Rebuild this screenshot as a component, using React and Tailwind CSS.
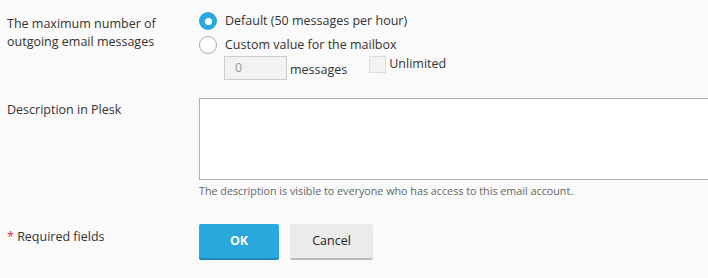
export default function App() {
  return (
    <div className="w-[708px] h-[278px] overflow-hidden bg-[#fafafa] text-[12.5px] leading-[18px] text-[#333] font-['Open_Sans',sans-serif]">
      <div className="flex pt-[10px]">
        <div className="w-[199px] shrink-0 pl-[7px] pt-[5px]">
          The maximum number of outgoing email messages
        </div>
        <div className="flex flex-col">
          <label className="flex items-center h-[22px]">
            <span className="w-[18px] h-[18px] rounded-full bg-[#29a8de] flex items-center justify-center">
              <span className="w-[7px] h-[7px] rounded-full bg-white" />
            </span>
            <span className="ml-[8px]">Default (50 messages per hour)</span>
          </label>
          <label className="flex items-center h-[22px] mt-[2px]">
            <span className="w-[18px] h-[18px] rounded-full border border-[#aaa] bg-white" />
            <span className="ml-[8px]">Custom value for the mailbox</span>
          </label>
          <div className="flex items-start ml-[25px]">
            <div className="w-[63px] h-[24px] border border-[#ccc] bg-[#f2f2f2] text-[#999] pl-[10px] leading-[22px]">0</div>
            <span className="ml-[3px] mt-[5px]">messages</span>
            <span className="ml-[22px] w-[17px] h-[17px] border border-[#ddd] bg-[#f2f2f2]" />
            <span className="ml-[3px] -mt-[1px]">Unlimited</span>
          </div>
        </div>
      </div>
      <div className="flex mt-[18px]">
        <div className="w-[199px] shrink-0 pl-[7px] pt-[3px]">Description in Plesk</div>
        <div className="flex flex-col">
          <div className="w-[520px] h-[82px] border border-[#b0b0b0] bg-white" />
          <div className="text-[10.75px] leading-[16px] text-[#666] mt-[3px]">
            The description is visible to everyone who has access to this email account.
          </div>
        </div>
      </div>
      <div className="flex mt-[25px]">
        <div className="w-[199px] shrink-0 pl-[7px] pt-[4px]">
          <span className="text-[#d0343d]">*</span> Required fields
        </div>
        <div className="flex gap-[11px]">
          <button className="w-[80px] h-[36px] bg-[#29a8de] border-b-2 border-[#1f86b8] text-white font-bold text-[12.5px] rounded-[2px]">OK</button>
          <button className="w-[83px] h-[36px] bg-[#ebebeb] border-b-2 border-[#bdbdbd] text-[#222] text-[12.5px] rounded-[2px]">Cancel</button>
        </div>
      </div>
    </div>
  );
}
